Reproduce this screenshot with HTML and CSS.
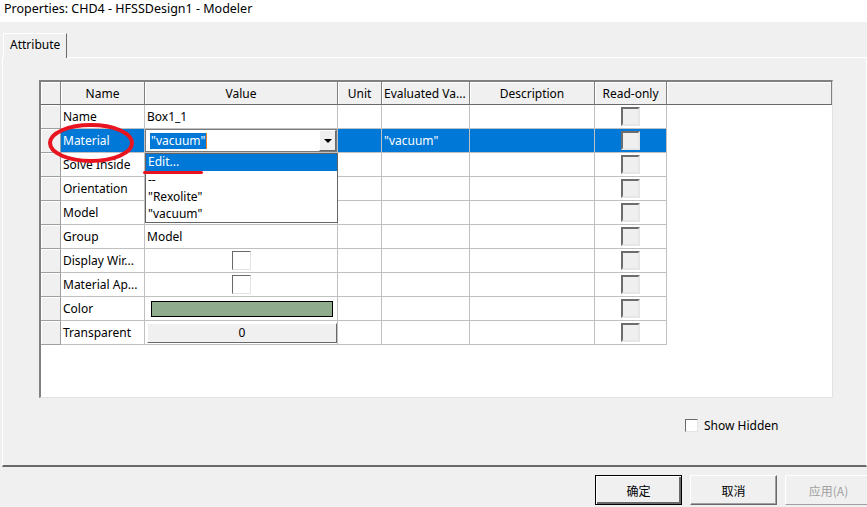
FILE: index.html
```html
<!DOCTYPE html>
<html lang="en">
  <head>
    <meta charset="UTF-8" />
    <meta name="viewport" content="width=device-width, initial-scale=1.0" />
    <title>Properties: CHD4 - HFSSDesign1 - Modeler</title>
    <link rel="stylesheet" href="styles.css">
  </head>
  <body>
    <div class="titlebar">Properties: CHD4 - HFSSDesign1 - Modeler</div>

    <div class="tabstrip">
      <div class="tab">Attribute</div>
    </div>

    <div class="panel">
      <div class="grid">
        <table class="props">
          <colgroup>
            <col class="c-rh" />
            <col class="c-name" />
            <col class="c-value" />
            <col class="c-unit" />
            <col class="c-eval" />
            <col class="c-desc" />
            <col class="c-ro" />
            <col />
          </colgroup>
          <thead>
            <tr>
              <th></th>
              <th>Name</th>
              <th>Value</th>
              <th>Unit</th>
              <th class="left">Evaluated Va...</th>
              <th>Description</th>
              <th>Read-only</th>
              <th></th>
            </tr>
          </thead>
          <tbody>
            <tr>
              <td class="rh"></td>
              <td>Name</td>
              <td>Box1_1</td>
              <td></td>
              <td></td>
              <td></td>
              <td><span class="ro"></span></td>
              <td class="filler"></td>
            </tr>
            <tr class="selected">
              <td class="rh"></td>
              <td>Material</td>
              <td class="editing">
                <div class="combo">
                  <span class="sel">"vacuum"</span><span class="caret"></span>
                  <span class="drop"><span class="arrow"></span></span>
                </div>
                <!-- liste ouverte du combo -->
                <div class="droplist">
                  <div class="item active">Edit...</div>
                  <div class="item">--</div>
                  <div class="item">"Rexolite"</div>
                  <div class="item">"vacuum"</div>
                </div>
              </td>
              <td></td>
              <td>"vacuum"</td>
              <td></td>
              <td><span class="ro"></span></td>
              <td class="filler"></td>
            </tr>
            <tr>
              <td class="rh"></td>
              <td>Solve Inside</td>
              <td></td>
              <td></td>
              <td></td>
              <td></td>
              <td><span class="ro"></span></td>
              <td class="filler"></td>
            </tr>
            <tr>
              <td class="rh"></td>
              <td>Orientation</td>
              <td></td>
              <td></td>
              <td></td>
              <td></td>
              <td><span class="ro"></span></td>
              <td class="filler"></td>
            </tr>
            <tr>
              <td class="rh"></td>
              <td>Model</td>
              <td></td>
              <td></td>
              <td></td>
              <td></td>
              <td><span class="ro"></span></td>
              <td class="filler"></td>
            </tr>
            <tr>
              <td class="rh"></td>
              <td>Group</td>
              <td>Model</td>
              <td></td>
              <td></td>
              <td></td>
              <td><span class="ro"></span></td>
              <td class="filler"></td>
            </tr>
            <tr>
              <td class="rh"></td>
              <td>Display Wir...</td>
              <td><span class="cb"></span></td>
              <td></td>
              <td></td>
              <td></td>
              <td><span class="ro"></span></td>
              <td class="filler"></td>
            </tr>
            <tr>
              <td class="rh"></td>
              <td>Material Ap...</td>
              <td><span class="cb"></span></td>
              <td></td>
              <td></td>
              <td></td>
              <td><span class="ro"></span></td>
              <td class="filler"></td>
            </tr>
            <tr>
              <td class="rh"></td>
              <td>Color</td>
              <td><div class="swatch"></div></td>
              <td></td>
              <td></td>
              <td></td>
              <td><span class="ro"></span></td>
              <td class="filler"></td>
            </tr>
            <tr>
              <td class="rh"></td>
              <td>Transparent</td>
              <td><div class="valbtn">0</div></td>
              <td></td>
              <td></td>
              <td></td>
              <td><span class="ro"></span></td>
              <td class="filler"></td>
            </tr>
          </tbody>
        </table>

        <!-- annotations rouges -->
        <svg class="circle" width="92" height="46" viewBox="0 0 92 46">
          <ellipse cx="46" cy="23" rx="41" ry="18" fill="none" stroke="#e8141f" stroke-width="4" />
        </svg>
        <div class="underline"></div>
      </div>

      <div class="options">
        <span class="chk"></span>
        <span>Show Hidden</span>
      </div>
    </div>

    <div class="buttons">
      <button class="default">确定</button>
      <button>取消</button>
      <button class="disabled">应用(A)</button>
    </div>
  </body>
</html>
```

FILE: styles.css
```css
body {
  margin: 0;
  background: #f0f0f0;
  font-family: "Noto Sans", "Noto Sans CJK SC", sans-serif;
  font-size: 12px;
  color: #000;
  overflow: hidden;
}
.titlebar {
  height: 22px;
  background: #fff;
  padding-left: 4px;
  line-height: 18px;
  font-size: 12.5px;
}
.tabstrip {
  padding: 11px 0 0 3px;
  height: 24px;
}
.tab {
  display: inline-block;
  box-sizing: border-box;
  width: 64px;
  height: 25px;
  padding-left: 6px;
  line-height: 22px;
  border: 1px solid #fff;
  border-right-color: #696969;
  border-bottom: none;
  background: #f0f0f0;
  position: relative;
  z-index: 1;
}
.panel {
  box-sizing: border-box;
  height: 410px;
  margin: 0 0 0 2px;
  padding: 22px 0 0 36px;
  border-top: 1px solid #fff;
  border-left: 1px solid #fff;
  border-right: 1px solid #fff;
  border-bottom: 2px solid #696969;
}
.grid {
  position: relative;
  box-sizing: border-box;
  width: 794px;
  height: 318px;
  background: #fff;
  border-top: 2px solid #808080;
  border-left: 2px solid #808080;
  border-right: 1px solid #e3e3e3;
  border-bottom: 1px solid #e3e3e3;
}
.props {
  width: 100%;
  table-layout: fixed;
  border-spacing: 0;
}
.c-rh { width: 20px; }
.c-name { width: 84px; }
.c-value { width: 193px; }
.c-unit { width: 44px; }
.c-eval { width: 88px; }
.c-desc { width: 125px; }
.c-ro { width: 72px; }
th {
  box-sizing: border-box;
  height: 23px;
  padding: 0;
  font-weight: normal;
  background: #f0f0f0;
  border-right: 1px solid #808080;
  border-bottom: 1px solid #696969;
  box-shadow: inset 1px 1px #fff;
  white-space: nowrap;
  overflow: hidden;
}
th.left {
  text-align: left;
  padding-left: 2px;
}
td {
  box-sizing: border-box;
  height: 24px;
  padding: 0 2px;
  border-right: 1px solid #c0c0c0;
  border-bottom: 1px solid #c0c0c0;
  white-space: nowrap;
  overflow: hidden;
}
td.rh {
  background: #f0f0f0;
  border-right-color: #a0a0a0;
  border-bottom-color: #a0a0a0;
  box-shadow: inset 1px 1px #fff;
}
td.filler {
  border: none;
}
.selected td:not(.rh):not(.filler) {
  background: #0078d7;
  color: #fff;
}
td.editing {
  position: relative;
  padding: 0;
  overflow: visible;
}
.combo {
  box-sizing: border-box;
  width: 192px;
  height: 23px;
  background: #fff;
  border: 1px solid #7a7a7a;
  display: flex;
  align-items: center;
  padding-left: 4px;
}
.sel {
  background: #0078d7;
  color: #fff;
  line-height: 16px;
  padding: 0 1px;
}
.caret {
  width: 1px;
  height: 16px;
  background: #f08020;
}
.drop {
  box-sizing: border-box;
  margin-left: auto;
  margin-right: 0;
  width: 17px;
  height: 21px;
  background: #f0f0f0;
  border: 1px solid;
  border-color: #fff #696969 #696969 #fff;
  display: flex;
  align-items: center;
  justify-content: center;
}
.arrow {
  width: 0;
  height: 0;
  border-left: 4px solid transparent;
  border-right: 4px solid transparent;
  border-top: 4px solid #000;
}
.droplist {
  position: absolute;
  top: 24px;
  left: 0;
  z-index: 2;
  box-sizing: border-box;
  width: 193px;
  height: 70px;
  background: #fff;
  border: 1px solid #646464;
  color: #000;
}
.item {
  height: 17px;
  line-height: 18px;
  padding-left: 2px;
}
.item.active {
  background: #0078d7;
  color: #fff;
  line-height: 16px;
}
.ro {
  display: block;
  box-sizing: border-box;
  width: 19px;
  height: 19px;
  margin: 0 auto;
  background: #efefef;
  border: 2px solid;
  border-color: #6d6d6d #e6e6e6 #e6e6e6 #6d6d6d;
}
.cb {
  display: block;
  box-sizing: border-box;
  width: 19px;
  height: 19px;
  margin: 0 auto;
  background: #fff;
  border: 1px solid;
  border-color: #696969 #e3e3e3 #e3e3e3 #696969;
}
.swatch {
  box-sizing: border-box;
  width: 182px;
  height: 16px;
  margin: 1px 0 0 4px;
  background: #8fac8c;
  border: 1px solid #000;
}
.valbtn {
  box-sizing: border-box;
  width: 190px;
  height: 20px;
  margin: 1px 0 0 0;
  background: #f0f0f0;
  border: 1px solid;
  border-color: #fff #696969 #696969 #fff;
  text-align: center;
  line-height: 18px;
}
.circle {
  position: absolute;
  left: 4px;
  top: 38px;
  z-index: 3;
}
.underline {
  position: absolute;
  left: 102px;
  top: 89px;
  width: 60px;
  height: 3px;
  border-radius: 2px;
  background: #e8141f;
  z-index: 3;
}
.options {
  display: flex;
  align-items: center;
  gap: 6px;
  margin-top: 19px;
  padding-left: 646px;
}
.chk {
  box-sizing: border-box;
  width: 13px;
  height: 13px;
  background: #fff;
  border: 1px solid;
  border-color: #696969 #e3e3e3 #e3e3e3 #696969;
}
.buttons {
  display: flex;
  gap: 8px;
  padding: 8px 0 0 595px;
}
button {
  box-sizing: border-box;
  width: 87px;
  height: 30px;
  flex-shrink: 0;
  font-family: "Noto Sans CJK SC", "Noto Sans", sans-serif;
  font-size: 12px;
  background: #f0f0f0;
  border: 1px solid;
  border-color: #fff #696969 #696969 #fff;
  box-shadow: inset -1px -1px #a0a0a0;
  padding: 0;
}
button.default {
  border: 1px solid #000;
  box-shadow: inset 1px 1px #fff, inset -2px -2px #696969;
}
button.disabled {
  color: #a0a0a0;
  border-color: #fff #a0a0a0 #a0a0a0 #fff;
  box-shadow: none;
}
```
